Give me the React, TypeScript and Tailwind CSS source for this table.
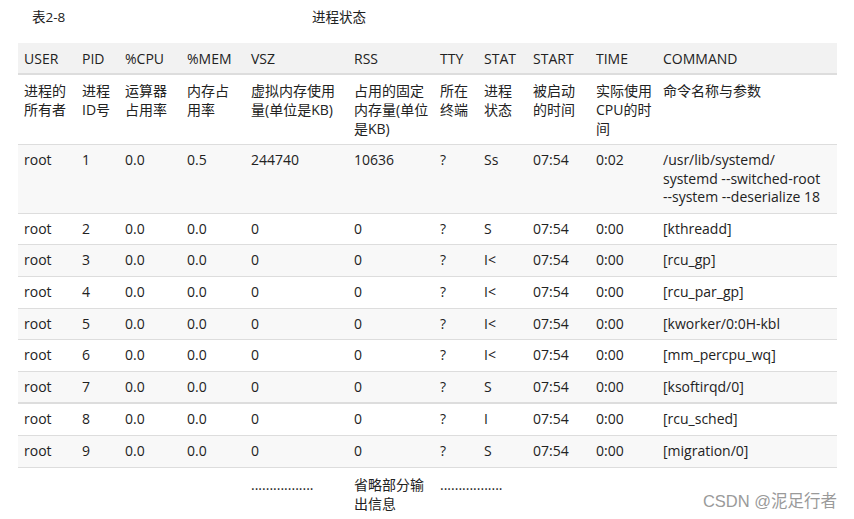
import React from 'react';

const cols = 'grid grid-cols-[58px_43px_62px_64px_103px_86px_44px_49px_63px_67px_180px]';

const headers = ['USER', 'PID', '%CPU', '%MEM', 'VSZ', 'RSS', 'TTY', 'STAT', 'START', 'TIME', 'COMMAND'];

const descs: string[][] = [
  ['进程的', '所有者'],
  ['进程', 'ID号'],
  ['运算器', '占用率'],
  ['内存占', '用率'],
  ['虚拟内存使用', '量(单位是KB)'],
  ['占用的固定', '内存量(单位', '是KB)'],
  ['所在', '终端'],
  ['进程', '状态'],
  ['被启动', '的时间'],
  ['实际使用', 'CPU的时', '间'],
  ['命令名称与参数'],
];

const rows: string[][] = [
  ['root', '1', '0.0', '0.5', '244740', '10636', '?', 'Ss', '07:54', '0:02', '/usr/lib/systemd/\nsystemd --switched-root\n--system --deserialize 18'],
  ['root', '2', '0.0', '0.0', '0', '0', '?', 'S', '07:54', '0:00', '[kthreadd]'],
  ['root', '3', '0.0', '0.0', '0', '0', '?', 'I<', '07:54', '0:00', '[rcu_gp]'],
  ['root', '4', '0.0', '0.0', '0', '0', '?', 'I<', '07:54', '0:00', '[rcu_par_gp]'],
  ['root', '5', '0.0', '0.0', '0', '0', '?', 'I<', '07:54', '0:00', '[kworker/0:0H-kbl'],
  ['root', '6', '0.0', '0.0', '0', '0', '?', 'I<', '07:54', '0:00', '[mm_percpu_wq]'],
  ['root', '7', '0.0', '0.0', '0', '0', '?', 'S', '07:54', '0:00', '[ksoftirqd/0]'],
  ['root', '8', '0.0', '0.0', '0', '0', '?', 'I', '07:54', '0:00', '[rcu_sched]'],
  ['root', '9', '0.0', '0.0', '0', '0', '?', 'S', '07:54', '0:00', '[migration/0]'],
];

export default function App() {
  return (
    <div
      className="relative w-[854px] h-[519px] bg-white text-[#222] text-[14px] overflow-hidden"
      style={{ fontFamily: '"Open Sans", "Noto Sans CJK SC", sans-serif' }}
    >
      <div className="flex pt-[8px] h-[43px] leading-[19px] text-[13.5px]">
        <span className="pl-[32px] w-[312px]">表2-8</span>
        <span>进程状态</span>
      </div>

      <div className="mx-[18px] w-[819px]">
        <div className={`${cols} bg-[#f2f2f2] border-b-2 border-[#dddddd] h-[32px] items-center`}>
          {headers.map((h) => (
            <div key={h} className="px-[6px] whitespace-nowrap">{h}</div>
          ))}
        </div>

        <div className={`${cols} border-b border-[#dddddd] py-[6px] leading-[19px]`}>
          {descs.map((d, i) => (
            <div key={i} className="px-[6px] whitespace-nowrap">
              {d.map((line, j) => (
                <div key={j}>{line}</div>
              ))}
            </div>
          ))}
        </div>

        {rows.map((r, i) => (
          <div
            key={i}
            className={`${cols} py-[6px] leading-[18.6px] border-[#dddddd] ${i % 2 === 0 ? 'bg-[#f8f8f8]' : 'bg-white'} ${i === 6 ? 'border-b-2' : 'border-b'}`}
          >
            {r.map((c, j) => (
              <div key={j} className="px-[6px] whitespace-pre">{c}</div>
            ))}
          </div>
        ))}

        <div className={`${cols} pt-[7px] leading-[19px]`}>
          <div className="col-span-4" />
          <div className="px-[6px] whitespace-nowrap">.................</div>
          <div className="px-[6px]">省略部分输<br />出信息</div>
          <div className="px-[6px] whitespace-nowrap">.................</div>
        </div>
      </div>

      <div
        className="absolute right-[17px] bottom-[7px] text-[16.5px] text-[#9a9a9a] leading-[22px]"
        style={{ fontFamily: '"Liberation Sans", "Noto Sans CJK SC", sans-serif' }}
      >
        CSDN @泥足行者
      </div>
    </div>
  );
}
